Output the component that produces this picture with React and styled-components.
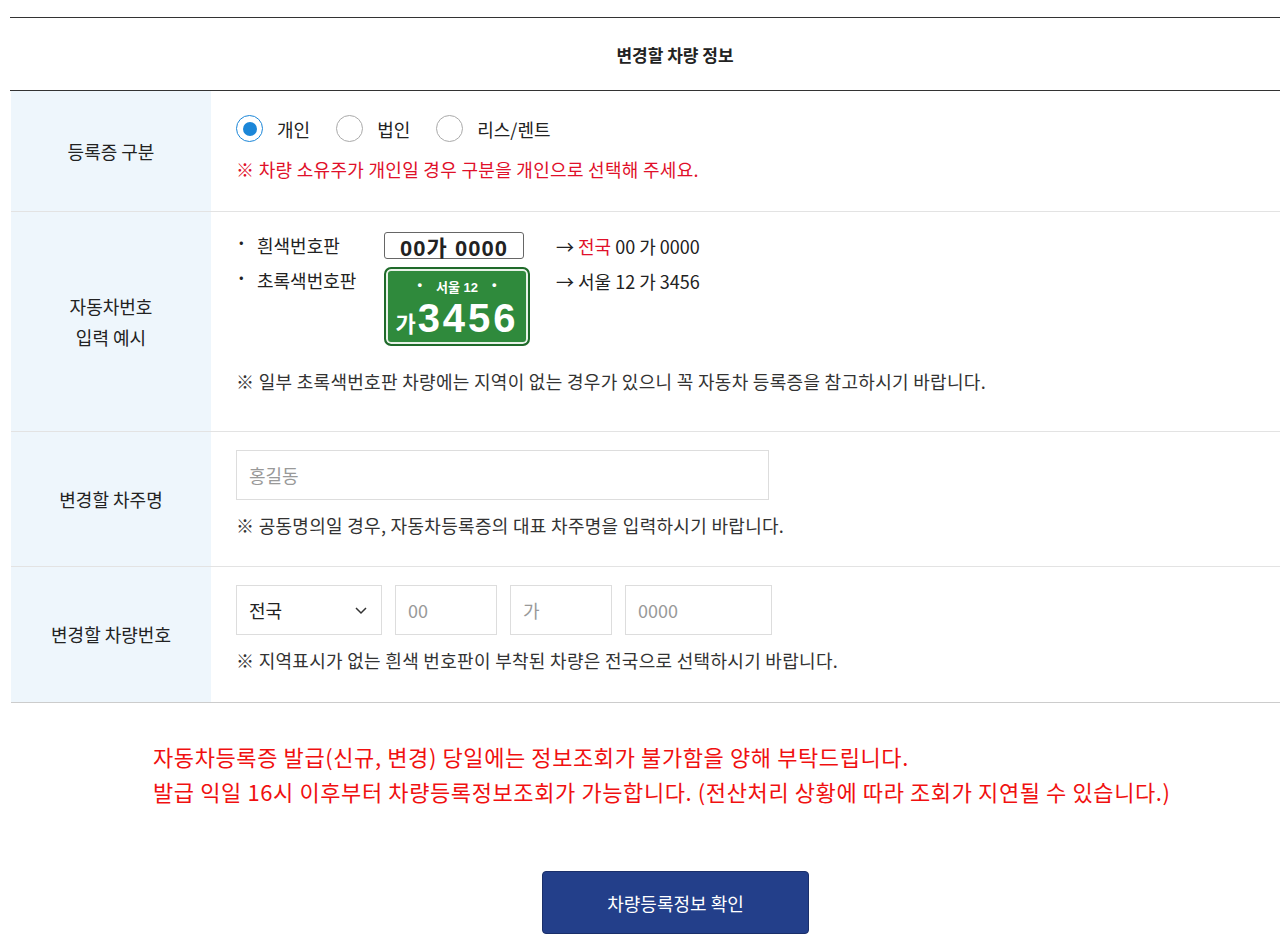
import React from 'react';
import styled, { createGlobalStyle } from 'styled-components';

const Global = createGlobalStyle`
  body { margin: 0; background: #fff; font-family: "Noto Sans CJK KR", "Noto Sans", sans-serif; color: #222; }
`;

const Page = styled.div`
  padding: 17px 0 0 11px;
`;

const Title = styled.div`
  border-top: 1px solid #333;
  border-bottom: 1px solid #333;
  height: 74px;
  box-sizing: border-box;
  display: flex;
  align-items: center;
  justify-content: center;
  padding-left: 60px;
  font-size: 17px;
  font-weight: 700;
  margin-left: -1px;
`;

const Row = styled.div`
  display: grid;
  grid-template-columns: 200px 1fr;
  height: ${p => p.h}px;
  box-sizing: border-box;
  border-bottom: 1px solid ${p => p.last ? '#ccc' : '#e3e3e3'};
`;

const Label = styled.div`
  background: #eef6fc;
  display: flex;
  align-items: center;
  justify-content: center;
  text-align: center;
  font-size: 18px;
  line-height: 31px;
`;

const Cell = styled.div`
  padding: ${p => p.pt || 20}px 24px 0 25px;
  display: flex;
  flex-direction: column;
  gap: ${p => p.gap || 12}px;
`;

const Radios = styled.div`
  display: flex;
  align-items: center;
  gap: 26px;
  font-size: 18px;
`;

const RadioItem = styled.label`
  display: flex;
  align-items: center;
  gap: 14px;
`;

const Circle = styled.span`
  width: 25px;
  height: 25px;
  border-radius: 50%;
  border: 1px solid ${p => p.on ? '#1b86d8' : '#aaa'};
  display: flex;
  align-items: center;
  justify-content: center;
  &::after {
    content: '';
    display: ${p => p.on ? 'block' : 'none'};
    width: 14px;
    height: 14px;
    border-radius: 50%;
    background: #1b86d8;
  }
`;

const Note = styled.div`
  font-size: 18px;
  color: ${p => p.red ? '#e0102a' : '#333'};
  letter-spacing: 0.3px;
`;

const Plates = styled.div`
  display: grid;
  grid-template-columns: 148px 172px auto;
  row-gap: 8px;
  font-size: 18px;
  align-items: start;
`;

const Bullet = styled.div`
  position: relative;
  padding-left: 21px;
  &::before { content: '·'; position: absolute; left: 0; top: -3px; font-weight: 700; }
`;

const WhitePlate = styled.div`
  width: 140px;
  height: 27px;
  box-sizing: border-box;
  border: 1px solid #666;
  border-radius: 3px;
  display: flex;
  align-items: center;
  justify-content: center;
  font-family: "Liberation Sans", "Noto Sans CJK KR", sans-serif;
  font-weight: 700;
  font-size: 22px;
  letter-spacing: 1px;
`;

const GreenPlate = styled.div`
  width: 146px;
  height: 79px;
  box-sizing: border-box;
  border-radius: 7px;
  background: #2f8a3c;
  border: 2px solid #1f6a2a;
  box-shadow: inset 0 0 0 2px #e8f2e8, inset 0 0 0 3px #2f8a3c;
  color: #fff;
  display: flex;
  flex-direction: column;
  align-items: center;
  font-family: "Liberation Sans", "Noto Sans CJK KR", sans-serif;
  font-weight: 700;
`;

const PlateTop = styled.div`
  font-size: 13px;
  margin-top: 8px;
  display: flex;
  gap: 14px;
`;

const PlateMain = styled.div`
  font-size: 40px;
  line-height: 44px;
  letter-spacing: 3px;
  & small { font-size: 22px; letter-spacing: 0; margin-right: 2px; }
`;

const Arrow = styled.div`
  padding-top: 1px;
  & b { color: #e0102a; font-weight: 400; }
`;

const Input = styled.div`
  width: ${p => p.w}px;
  height: 50px;
  box-sizing: border-box;
  border: 1px solid #ddd;
  display: flex;
  align-items: center;
  justify-content: space-between;
  padding: 0 12px;
  font-size: 18px;
  color: ${p => p.dark ? '#222' : '#999'};
`;

const Inputs = styled.div`
  display: flex;
  gap: 13px;
`;

const Notice = styled.div`
  margin: 36px 0 0 142px;
  color: #f01010;
  font-size: 22px;
  line-height: 35px;
  letter-spacing: 0.6px;
`;

const Button = styled.button`
  display: block;
  margin: 62px 0 0 531px;
  width: 267px;
  height: 63px;
  background: #233f8a;
  color: #fff;
  border: 1px solid #1a2f6a;
  border-radius: 4px;
  font-family: inherit;
  font-size: 18px;
`;

export default function App() {
  return (
    <Page>
      <Global />
      <Title>변경할 차량 정보</Title>
      <Row h={121}>
        <Label>등록증 구분</Label>
        <Cell pt={24} gap={14}>
          <Radios>
            <RadioItem><Circle on />개인</RadioItem>
            <RadioItem><Circle />법인</RadioItem>
            <RadioItem><Circle />리스/렌트</RadioItem>
          </Radios>
          <Note red>※ 차량 소유주가 개인일 경우 구분을 개인으로 선택해 주세요.</Note>
        </Cell>
      </Row>
      <Row h={220}>
        <Label>자동차번호<br />입력 예시</Label>
        <Cell pt={20} gap={22}>
          <Plates>
            <Bullet>흰색번호판</Bullet>
            <WhitePlate>00가 0000</WhitePlate>
            <Arrow>→ <b>전국</b> 00 가 0000</Arrow>
            <Bullet>초록색번호판</Bullet>
            <GreenPlate>
              <PlateTop><span>•</span>서울 12<span>•</span></PlateTop>
              <PlateMain><small>가</small>3456</PlateMain>
            </GreenPlate>
            <Arrow>→ 서울 12 가 3456</Arrow>
          </Plates>
          <Note>※ 일부 초록색번호판 차량에는 지역이 없는 경우가 있으니 꼭 자동차 등록증을 참고하시기 바랍니다.</Note>
        </Cell>
      </Row>
      <Row h={135}>
        <Label>변경할 차주명</Label>
        <Cell pt={18} gap={12}>
          <Input w={533}>홍길동</Input>
          <Note>※ 공동명의일 경우, 자동차등록증의 대표 차주명을 입력하시기 바랍니다.</Note>
        </Cell>
      </Row>
      <Row h={136} last>
        <Label>변경할 차량번호</Label>
        <Cell pt={18} gap={12}>
          <Inputs>
            <Input w={146} dark>전국
              <svg width="16" height="16" viewBox="0 0 16 16" fill="none" stroke="#333" strokeWidth="1.5"><path d="M3 6l5 5 5-5" /></svg>
            </Input>
            <Input w={102}>00</Input>
            <Input w={102}>가</Input>
            <Input w={147}>0000</Input>
          </Inputs>
          <Note>※ 지역표시가 없는 흰색 번호판이 부착된 차량은 전국으로 선택하시기 바랍니다.</Note>
        </Cell>
      </Row>
      <Notice>
        자동차등록증 발급(신규, 변경) 당일에는 정보조회가 불가함을 양해 부탁드립니다.<br />
        발급 익일 16시 이후부터 차량등록정보조회가 가능합니다. (전산처리 상황에 따라 조회가 지연될 수 있습니다.)
      </Notice>
      <Button>차량등록정보 확인</Button>
    </Page>
  );
}
